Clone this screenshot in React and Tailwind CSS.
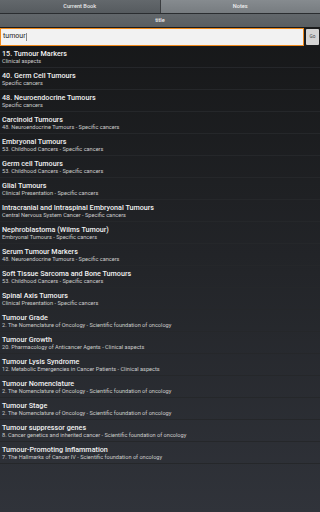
const rows = [
  ["15. Tumour Markers", "Clinical aspects"],
  ["40. Germ Cell Tumours", "Specific cancers"],
  ["48. Neuroendocrine Tumours", "Specific cancers"],
  ["Carcinoid Tumours", "48. Neuroendocrine Tumours - Specific cancers"],
  ["Embryonal Tumours", "53. Childhood Cancers - Specific cancers"],
  ["Germ cell Tumours", "53. Childhood Cancers - Specific cancers"],
  ["Glial Tumours", "Clinical Presentation - Specific cancers"],
  ["Intracranial and Intraspinal Embryonal Tumours", "Central Nervous System Cancer - Specific cancers"],
  ["Nephroblastoma (Wilms Tumour)", "Embryonal Tumours - Specific cancers"],
  ["Serum Tumour Markers", "48. Neuroendocrine Tumours - Specific cancers"],
  ["Soft Tissue Sarcoma and Bone Tumours", "53. Childhood Cancers - Specific cancers"],
  ["Spinal Axis Tumours", "Clinical Presentation - Specific cancers"],
  ["Tumour Grade", "2. The Nomenclature of Oncology - Scientific foundation of oncology"],
  ["Tumour Growth", "20. Pharmacology of Anticancer Agents - Clinical aspects"],
  ["Tumour Lysis Syndrome", "12. Metabolic Emergencies in Cancer Patients - Clinical aspects"],
  ["Tumour Nomenclature", "2. The Nomenclature of Oncology - Scientific foundation of oncology"],
  ["Tumour Stage", "2. The Nomenclature of Oncology - Scientific foundation of oncology"],
  ["Tumour suppressor genes", "8. Cancer genetics and inherited cancer - Scientific foundation of oncology"],
  ["Tumour-Promoting Inflammation", "7. The Hallmarks of Cancer IV - Scientific foundation of oncology"],
];

export default function App() {
  return (
    <div
      className="w-[320px] h-[512px] flex flex-col overflow-hidden bg-gradient-to-b from-[#151617] to-[#30333a]"
      style={{ fontFamily: "Roboto, 'Liberation Sans', sans-serif" }}
    >
      <div className="flex h-[14px] border-b border-[#2a2d30]">
        <div className="flex-1 flex items-center justify-center bg-gradient-to-b from-[#63686c] to-[#565b5f] text-[5.6px] font-medium text-[#e8e8e8] border-r border-[#3a3d40]">
          Current Book
        </div>
        <div className="flex-1 flex items-center justify-center bg-gradient-to-b from-[#868b8f] to-[#777c80] text-[5.6px] font-medium text-[#f0f0f0]">
          Notes
        </div>
      </div>
      <div className="h-[13px] flex items-center justify-center bg-gradient-to-b from-[#62676b] to-[#595e62] text-[5.6px] font-medium text-[#eeeeee]">
        title
      </div>
      <div className="flex items-center h-[19px] gap-[2px] pr-[1px] bg-[#1a1b1c]">
        <div className="flex-1 h-[18px] flex items-center bg-[#f2f2f2] border border-[#f08a1c] px-[2px] text-[7px] text-[#222]">
          tumour<span className="w-[1px] h-[8px] bg-[#888] ml-[0.5px]" />
        </div>
        <div className="w-[13px] h-[16px] flex items-center justify-center bg-[#d4d4d4] text-[4.8px] text-[#444] rounded-[1px]">
          Go
        </div>
      </div>
      <div className="flex flex-col">
        {rows.map(([t, s], i) => (
          <div key={i} className="h-[22px] flex flex-col justify-center px-[2px] border-b border-[#25272a]">
            <div className="text-[7.2px] leading-[9px] font-medium text-[#f2f2f2] whitespace-nowrap">{t}</div>
            <div className="text-[5.6px] leading-[7px] text-[#cccccc] whitespace-nowrap">{s}</div>
          </div>
        ))}
      </div>
    </div>
  );
}
